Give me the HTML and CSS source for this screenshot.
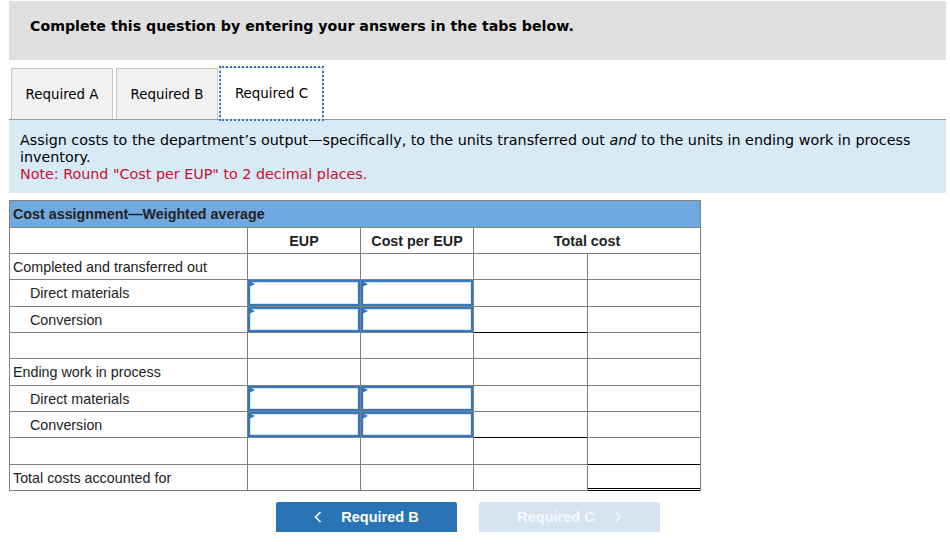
FILE: index.html
```html
<!DOCTYPE html>
<html>
<head>
<meta charset="utf-8">
<link rel="stylesheet" href="styles.css">
</head>
<body>
<div class="page">
  <div class="banner">Complete this question by entering your answers in the tabs below.</div>
  <div class="tabs">
    <div class="tab">Required A</div>
    <div class="tab">Required B</div>
    <div class="tab active">Required C</div>
  </div>
  <div class="panel">
    <p>Assign costs to the department’s output—specifically, to the units transferred out <em>and</em> to the units in ending work in process inventory.</p>
    <p class="note">Note: Round "Cost per EUP" to 2 decimal places.</p>
  </div>
  <div class="grid">
    <div class="title">Cost assignment—Weighted average</div>

    <div class="c"></div>
    <div class="c hd">EUP</div>
    <div class="c hd">Cost per EUP</div>
    <div class="c hd span2">Total cost</div>

    <div class="c lbl">Completed and transferred out</div>
    <div class="c"></div><div class="c"></div><div class="c"></div><div class="c"></div>

    <div class="c lbl ind">Direct materials</div>
    <div class="c inp"><input type="text"></div>
    <div class="c inp"><input type="text"></div>
    <div class="c"></div><div class="c"></div>

    <div class="c lbl ind">Conversion</div>
    <div class="c inp"><input type="text"></div>
    <div class="c inp"><input type="text"></div>
    <div class="c under"></div><div class="c"></div>

    <div class="c"></div><div class="c"></div><div class="c"></div><div class="c"></div><div class="c"></div>

    <div class="c lbl">Ending work in process</div>
    <div class="c"></div><div class="c"></div><div class="c"></div><div class="c"></div>

    <div class="c lbl ind">Direct materials</div>
    <div class="c inp"><input type="text"></div>
    <div class="c inp"><input type="text"></div>
    <div class="c"></div><div class="c"></div>

    <div class="c lbl ind">Conversion</div>
    <div class="c inp"><input type="text"></div>
    <div class="c inp"><input type="text"></div>
    <div class="c under"></div><div class="c"></div>

    <div class="c"></div><div class="c"></div><div class="c"></div><div class="c"></div><div class="c"></div>

    <div class="c lbl">Total costs accounted for</div>
    <div class="c"></div><div class="c"></div><div class="c"></div><div class="c total"></div>
  </div>
  <div class="nav">
    <button class="btn prev"><svg width="8" height="12" viewBox="0 0 8 12"><polyline points="6.5,1 1.5,6 6.5,11" fill="none" stroke="#fff" stroke-width="1.6"/></svg><span>Required B</span></button>
    <button class="btn next"><span>Required C</span><svg width="8" height="12" viewBox="0 0 8 12"><polyline points="1.5,1 6.5,6 1.5,11" fill="none" stroke="#fff" stroke-width="1.6"/></svg></button>
  </div>
</div>
</body>
</html>
```
FILE: styles.css
```css
body {
  margin: 0;
  background: #fff;
  font-family: "DejaVu Sans", Verdana, sans-serif;
  color: #000;
}
.page {
  padding-left: 9px;
  padding-top: 1px;
  width: 937px;
}
.banner {
  height: 59px;
  box-sizing: border-box;
  background: #e0e0e0;
  padding: 16px 0 0 21px;
  font-weight: bold;
  font-size: 14.2px;
  line-height: 18px;
}
.tabs {
  margin-top: 7px;
  height: 53px;
  box-sizing: border-box;
  border-bottom: 1px solid #9a9a9a;
  display: flex;
  align-items: flex-end;
  padding-left: 2px;
}
.tab {
  width: 102px;
  height: 51px;
  box-sizing: border-box;
  border: 1px solid #c8c8c8;
  border-bottom: none;
  background: #f2f2f2;
  font-size: 13.4px;
  display: flex;
  align-items: center;
  justify-content: center;
  margin-right: 3px;
}
.tab.active {
  background: #fff;
  width: 103px;
  margin-left: -1px;
  height: 53px;
  margin-bottom: -1px;
  border: 1px solid #c8c8c8;
  outline: 2px dotted #2f78c4;
  outline-offset: -1px;
}
.panel {
  background: #d9eaf7;
  height: 73px;
  box-sizing: border-box;
  padding: 12px 20px 0 11px;
  font-size: 14.3px;
  line-height: 17px;
}
.panel p { margin: 0; }
.note { color: #c6102e; }
.grid {
  margin-top: 7px;
  width: 692px;
  box-sizing: border-box;
  display: grid;
  grid-template-columns: 237px 112px 112px 113px 112px;
  grid-template-rows: 26px 25px 25px 26px 25px 25px 26px 25px 25px 26px 25px;
  gap: 1px;
  padding: 1px;
  background: #808080;
  font-family: "Liberation Sans", Arial, sans-serif;
  font-size: 14.3px;
  color: #222;
}
.title {
  grid-column: 1 / -1;
  background: #6fa9df;
  font-weight: bold;
  font-size: 14.3px;
  display: flex;
  align-items: center;
  padding-left: 3px;
}
.c {
  background: #fff;
  display: flex;
  align-items: center;
  position: relative;
}
.hd {
  justify-content: center;
  font-weight: bold;
}
.span2 { grid-column: span 2; }
.lbl { padding-left: 3px; }
.lbl.ind { padding-left: 20px; }
.inp input {
  width: 100%;
  height: 100%;
  box-sizing: border-box;
  margin: 0;
  border: 2px solid #3479bd;
  box-shadow: inset 0 0 0 1px #d6e6f5;
  background: #fff;
  outline: none;
  padding: 0 4px;
}
.inp::before {
  content: "";
  position: absolute;
  left: 1px;
  top: 1px;
  border-left: 6px solid #2f78c0;
  border-top: 3px solid transparent;
  border-bottom: 3px solid transparent;
}
.under { box-shadow: 0 1px 0 #000; }
.total {
  box-shadow: 0 -1px 0 #000, 0 1px 0 #000, inset 0 -1px 0 #fff, inset 0 -2px 0 #000;
}
.nav {
  margin-top: 11px;
  padding-left: 267px;
  display: flex;
  gap: 22px;
}
.btn {
  width: 181px;
  height: 30px;
  border: none;
  border-radius: 2px 2px 0 0;
  display: flex;
  align-items: center;
  justify-content: center;
  gap: 19px;
  font-family: "Liberation Sans", Arial, sans-serif;
  font-weight: bold;
  font-size: 14.5px;
  color: #fff;
  padding: 0;
}
.prev { background: #2a74b6; }
.next { background: #d6e4f2; color: #f4f8fc; }
.next svg polyline { stroke: #f4f8fc; }
```
